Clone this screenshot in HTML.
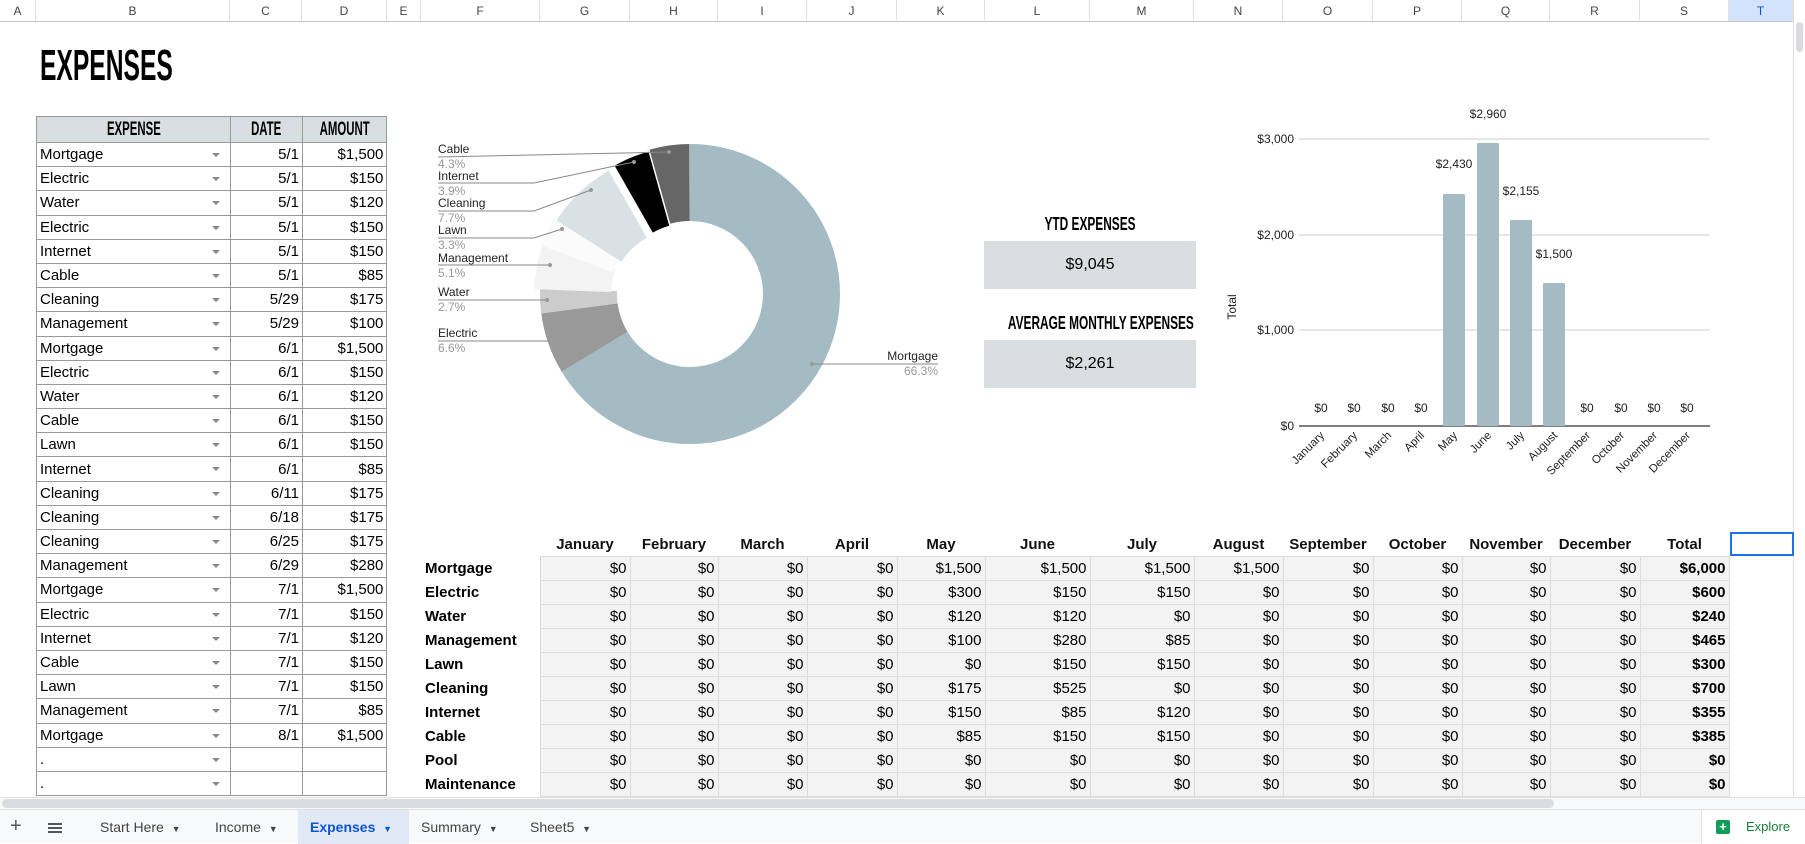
<!DOCTYPE html>
<html><head><meta charset="utf-8">
<style>
*{margin:0;padding:0;box-sizing:border-box}
body{width:1805px;height:843px;overflow:hidden;background:#fff;font-family:"Liberation Sans",Arial,sans-serif;position:relative;color:#000}
.abs{position:absolute}
.colhdr{position:absolute;top:0;height:22px;border-right:1px solid #e0e0e0;border-bottom:1px solid #c7c7c7;font-size:12px;color:#444;text-align:center;line-height:22px;background:#fff}
.cond{display:inline-block;transform:scaleX(0.6);transform-origin:center;white-space:nowrap;font-weight:bold}
table{border-collapse:collapse;table-layout:fixed}
#lt{position:absolute;left:36px;top:116px}
#lt td{border:1px solid #999;height:24.19px;font-size:15px;padding:0 3px;white-space:nowrap;overflow:hidden;position:relative}
#lt tr.h td{height:26px;background:#d9dfe1;text-align:center;font-size:19px;padding:0}
#lt td.r{text-align:right}
.dd{position:absolute;right:10px;top:10px;width:0;height:0;border-left:4px solid transparent;border-right:4px solid transparent;border-top:4px solid #888}
#bt{position:absolute;left:421px;top:533px}
#bt td{height:24px;font-size:15px;padding:0 3px;text-align:right;white-space:nowrap}
#bt tr.h td{height:23px;text-align:center;font-weight:bold;color:#111}
#bt td.l{text-align:left;font-weight:bold;padding-left:4px;background:#fff;border:none}
#bt tr.d td{background:#f3f3f3;border:1px solid #dcdcdc}
#bt tr.d td.l{background:#fff;border:none}
#bt td.t{font-weight:bold}
.box{position:absolute;left:984px;width:212px;height:48px;background:#d9dfe1;text-align:center;line-height:48px;font-size:16px}
.bl{position:absolute;font-size:12px;color:#222}
.bp{position:absolute;font-size:12px;color:#999}
</style></head><body>

<div class="colhdr" style="left:0;width:36px">A</div>
<div class="colhdr" style="left:36px;width:194px">B</div>
<div class="colhdr" style="left:230px;width:72px">C</div>
<div class="colhdr" style="left:302px;width:85px">D</div>
<div class="colhdr" style="left:387px;width:34px">E</div>
<div class="colhdr" style="left:421px;width:119px">F</div>
<div class="colhdr" style="left:540px;width:90px">G</div>
<div class="colhdr" style="left:630px;width:88px">H</div>
<div class="colhdr" style="left:718px;width:89px">I</div>
<div class="colhdr" style="left:807px;width:90px">J</div>
<div class="colhdr" style="left:897px;width:88px">K</div>
<div class="colhdr" style="left:985px;width:105px">L</div>
<div class="colhdr" style="left:1090px;width:104px">M</div>
<div class="colhdr" style="left:1194px;width:89px">N</div>
<div class="colhdr" style="left:1283px;width:90px">O</div>
<div class="colhdr" style="left:1373px;width:89px">P</div>
<div class="colhdr" style="left:1462px;width:88px">Q</div>
<div class="colhdr" style="left:1550px;width:90px">R</div>
<div class="colhdr" style="left:1640px;width:89px">S</div>
<div class="colhdr" style="left:1729px;width:64px;background:#d3e3fd;color:#0b57d0">T</div>
<div class="abs" style="left:1793px;top:0;width:12px;height:797px;background:#fff;border-left:1px solid #e0e0e0"></div>
<div class="abs" style="left:1796px;top:22px;width:7px;height:30px;background:#dadce0;border-radius:4px"></div>

<div class="abs" style="left:40px;top:38px;font-size:44px;line-height:56px;font-weight:bold;transform:scaleX(0.56);transform-origin:left;white-space:nowrap">EXPENSES</div>

<table id="lt">
<colgroup><col style="width:194px"><col style="width:72px"><col style="width:84px"></colgroup>
<tr class="h"><td><span class="cond">EXPENSE</span></td><td><span class="cond">DATE</span></td><td><span class="cond">AMOUNT</span></td></tr>
<tr><td>Mortgage<i class="dd"></i></td><td class="r">5/1</td><td class="r">$1,500</td></tr>
<tr><td>Electric<i class="dd"></i></td><td class="r">5/1</td><td class="r">$150</td></tr>
<tr><td>Water<i class="dd"></i></td><td class="r">5/1</td><td class="r">$120</td></tr>
<tr><td>Electric<i class="dd"></i></td><td class="r">5/1</td><td class="r">$150</td></tr>
<tr><td>Internet<i class="dd"></i></td><td class="r">5/1</td><td class="r">$150</td></tr>
<tr><td>Cable<i class="dd"></i></td><td class="r">5/1</td><td class="r">$85</td></tr>
<tr><td>Cleaning<i class="dd"></i></td><td class="r">5/29</td><td class="r">$175</td></tr>
<tr><td>Management<i class="dd"></i></td><td class="r">5/29</td><td class="r">$100</td></tr>
<tr><td>Mortgage<i class="dd"></i></td><td class="r">6/1</td><td class="r">$1,500</td></tr>
<tr><td>Electric<i class="dd"></i></td><td class="r">6/1</td><td class="r">$150</td></tr>
<tr><td>Water<i class="dd"></i></td><td class="r">6/1</td><td class="r">$120</td></tr>
<tr><td>Cable<i class="dd"></i></td><td class="r">6/1</td><td class="r">$150</td></tr>
<tr><td>Lawn<i class="dd"></i></td><td class="r">6/1</td><td class="r">$150</td></tr>
<tr><td>Internet<i class="dd"></i></td><td class="r">6/1</td><td class="r">$85</td></tr>
<tr><td>Cleaning<i class="dd"></i></td><td class="r">6/11</td><td class="r">$175</td></tr>
<tr><td>Cleaning<i class="dd"></i></td><td class="r">6/18</td><td class="r">$175</td></tr>
<tr><td>Cleaning<i class="dd"></i></td><td class="r">6/25</td><td class="r">$175</td></tr>
<tr><td>Management<i class="dd"></i></td><td class="r">6/29</td><td class="r">$280</td></tr>
<tr><td>Mortgage<i class="dd"></i></td><td class="r">7/1</td><td class="r">$1,500</td></tr>
<tr><td>Electric<i class="dd"></i></td><td class="r">7/1</td><td class="r">$150</td></tr>
<tr><td>Internet<i class="dd"></i></td><td class="r">7/1</td><td class="r">$120</td></tr>
<tr><td>Cable<i class="dd"></i></td><td class="r">7/1</td><td class="r">$150</td></tr>
<tr><td>Lawn<i class="dd"></i></td><td class="r">7/1</td><td class="r">$150</td></tr>
<tr><td>Management<i class="dd"></i></td><td class="r">7/1</td><td class="r">$85</td></tr>
<tr><td>Mortgage<i class="dd"></i></td><td class="r">8/1</td><td class="r">$1,500</td></tr>
<tr><td>.<i class="dd"></i></td><td class="r"></td><td class="r"></td></tr>
<tr><td>.<i class="dd"></i></td><td class="r"></td><td class="r"></td></tr>
</table>

<svg class="abs" style="left:0;top:0" width="1000" height="460">
<g transform="translate(690,294) rotate(-90)" fill="none" stroke-width="77">
<circle r="111.5" stroke="#a5bbc3" stroke-dasharray="464.5 700.6" stroke-dashoffset="0"/>
<circle r="111.5" stroke="#999999" stroke-dasharray="46.24 700.6" stroke-dashoffset="-464.5"/>
<circle r="111.5" stroke="#cccccc" stroke-dasharray="18.92 700.6" stroke-dashoffset="-510.74"/>
<circle r="111.5" stroke="#f3f3f3" stroke-dasharray="35.73 700.6" stroke-dashoffset="-529.66" transform="translate(-1,-6)"/>
<circle r="111.5" stroke="#fbfbfb" stroke-dasharray="23.12 700.6" stroke-dashoffset="-565.39" transform="translate(-4,-9)"/>
<circle r="111.5" stroke="#d9e1e4" stroke-dasharray="53.95 700.6" stroke-dashoffset="-588.51" transform="translate(-7,-7)"/>
<circle r="111.5" stroke="#000000" stroke-dasharray="27.32 700.6" stroke-dashoffset="-642.46" transform="translate(-2,-1)"/>
<circle r="111.5" stroke="#666666" stroke-dasharray="30.13 700.6" stroke-dashoffset="-669.78"/>
</g>
<g stroke="#888" stroke-width="1" fill="none">
<polyline points="438,157 669,152"/>
<polyline points="438,183 534,183 634,162"/>
<polyline points="438,211 534,211 591,190"/>
<polyline points="438,238 534,238 562,229"/>
<polyline points="438,265 550,265"/>
<polyline points="438,300 547,300"/>
<polyline points="438,341 551,341"/>
<polyline points="812,364 938,364"/>
</g>
<g fill="#999"><circle cx="669" cy="152" r="2"/><circle cx="634" cy="162" r="2"/><circle cx="591" cy="190" r="2"/><circle cx="562" cy="229" r="2"/><circle cx="550" cy="265" r="2"/><circle cx="547" cy="300" r="2"/><circle cx="551" cy="341" r="2"/><circle cx="812" cy="364" r="2"/></g>
</svg>
<div class="bl" style="left:438px;top:142px">Cable</div><div class="bp" style="left:438px;top:157px">4.3%</div>
<div class="bl" style="left:438px;top:169px">Internet</div><div class="bp" style="left:438px;top:184px">3.9%</div>
<div class="bl" style="left:438px;top:196px">Cleaning</div><div class="bp" style="left:438px;top:211px">7.7%</div>
<div class="bl" style="left:438px;top:223px">Lawn</div><div class="bp" style="left:438px;top:238px">3.3%</div>
<div class="bl" style="left:438px;top:251px">Management</div><div class="bp" style="left:438px;top:266px">5.1%</div>
<div class="bl" style="left:438px;top:285px">Water</div><div class="bp" style="left:438px;top:300px">2.7%</div>
<div class="bl" style="left:438px;top:326px">Electric</div><div class="bp" style="left:438px;top:341px">6.6%</div>
<div class="bl" style="left:838px;width:100px;text-align:right;top:349px">Mortgage</div><div class="bp" style="left:838px;width:100px;text-align:right;top:364px">66.3%</div>

<div class="abs" style="left:984px;width:212px;top:214px;text-align:center;font-size:18px"><span class="cond" style="transform:scaleX(0.66)">YTD EXPENSES</span></div>
<div class="box" style="top:241px">$9,045</div>
<div class="abs" style="left:960px;width:260px;top:313px;text-align:center;font-size:18px"><span class="cond" style="transform:scaleX(0.66)">AVERAGE MONTHLY EXPENSES</span></div>
<div class="box" style="top:340px">$2,261</div>

<svg class="abs" style="left:1200px;top:100px" width="530" height="400" font-family="Liberation Sans, Arial, sans-serif">
<g stroke="#ccc" stroke-width="1"><line x1="99" y1="39" x2="510" y2="39"/><line x1="99" y1="135" x2="510" y2="135"/><line x1="99" y1="230" x2="510" y2="230"/></g>
<line x1="99" y1="326" x2="510" y2="326" stroke="#333" stroke-width="1.3"/>
<g font-size="12" fill="#222" text-anchor="end"><text x="94" y="43">$3,000</text><text x="94" y="139">$2,000</text><text x="94" y="234">$1,000</text><text x="94" y="330">$0</text></g>
<text transform="translate(36,207) rotate(-90)" font-size="12" fill="#222" text-anchor="middle">Total</text>
<g fill="#a5bbc3">
<rect x="243" y="94" width="22" height="232" rx="1"/>
<rect x="277" y="43" width="22" height="283" rx="1"/>
<rect x="310" y="120" width="22" height="206" rx="1"/>
<rect x="343" y="183" width="22" height="143" rx="1"/>
</g>
<g font-size="12" fill="#222" text-anchor="middle">
<text x="254" y="68">$2,430</text><text x="288" y="18">$2,960</text><text x="321" y="95">$2,155</text><text x="354" y="158">$1,500</text>
<text x="121" y="312">$0</text><text x="154" y="312">$0</text><text x="188" y="312">$0</text><text x="221" y="312">$0</text>
<text x="387" y="312">$0</text><text x="421" y="312">$0</text><text x="454" y="312">$0</text><text x="487" y="312">$0</text>
</g>
<g font-size="11.5" fill="#222" text-anchor="end">
<text transform="translate(125,336) rotate(-45)">January</text>
<text transform="translate(158,336) rotate(-45)">February</text>
<text transform="translate(192,336) rotate(-45)">March</text>
<text transform="translate(225,336) rotate(-45)">April</text>
<text transform="translate(258,336) rotate(-45)">May</text>
<text transform="translate(292,336) rotate(-45)">June</text>
<text transform="translate(325,336) rotate(-45)">July</text>
<text transform="translate(358,336) rotate(-45)">August</text>
<text transform="translate(391,336) rotate(-45)">September</text>
<text transform="translate(425,336) rotate(-45)">October</text>
<text transform="translate(458,336) rotate(-45)">November</text>
<text transform="translate(491,336) rotate(-45)">December</text>
</g>
</svg>

<table id="bt">
<colgroup><col style="width:119px"><col style="width:90px"><col style="width:88px"><col style="width:89px"><col style="width:90px"><col style="width:88px"><col style="width:105px"><col style="width:104px"><col style="width:89px"><col style="width:90px"><col style="width:89px"><col style="width:88px"><col style="width:90px"><col style="width:89px"></colgroup>
<tr class="h"><td class="l"></td><td>January</td><td>February</td><td>March</td><td>April</td><td>May</td><td>June</td><td>July</td><td>August</td><td>September</td><td>October</td><td>November</td><td>December</td><td>Total</td></tr>
<tr class="d"><td class="l">Mortgage</td><td>$0</td><td>$0</td><td>$0</td><td>$0</td><td>$1,500</td><td>$1,500</td><td>$1,500</td><td>$1,500</td><td>$0</td><td>$0</td><td>$0</td><td>$0</td><td class="t">$6,000</td></tr>
<tr class="d"><td class="l">Electric</td><td>$0</td><td>$0</td><td>$0</td><td>$0</td><td>$300</td><td>$150</td><td>$150</td><td>$0</td><td>$0</td><td>$0</td><td>$0</td><td>$0</td><td class="t">$600</td></tr>
<tr class="d"><td class="l">Water</td><td>$0</td><td>$0</td><td>$0</td><td>$0</td><td>$120</td><td>$120</td><td>$0</td><td>$0</td><td>$0</td><td>$0</td><td>$0</td><td>$0</td><td class="t">$240</td></tr>
<tr class="d"><td class="l">Management</td><td>$0</td><td>$0</td><td>$0</td><td>$0</td><td>$100</td><td>$280</td><td>$85</td><td>$0</td><td>$0</td><td>$0</td><td>$0</td><td>$0</td><td class="t">$465</td></tr>
<tr class="d"><td class="l">Lawn</td><td>$0</td><td>$0</td><td>$0</td><td>$0</td><td>$0</td><td>$150</td><td>$150</td><td>$0</td><td>$0</td><td>$0</td><td>$0</td><td>$0</td><td class="t">$300</td></tr>
<tr class="d"><td class="l">Cleaning</td><td>$0</td><td>$0</td><td>$0</td><td>$0</td><td>$175</td><td>$525</td><td>$0</td><td>$0</td><td>$0</td><td>$0</td><td>$0</td><td>$0</td><td class="t">$700</td></tr>
<tr class="d"><td class="l">Internet</td><td>$0</td><td>$0</td><td>$0</td><td>$0</td><td>$150</td><td>$85</td><td>$120</td><td>$0</td><td>$0</td><td>$0</td><td>$0</td><td>$0</td><td class="t">$355</td></tr>
<tr class="d"><td class="l">Cable</td><td>$0</td><td>$0</td><td>$0</td><td>$0</td><td>$85</td><td>$150</td><td>$150</td><td>$0</td><td>$0</td><td>$0</td><td>$0</td><td>$0</td><td class="t">$385</td></tr>
<tr class="d"><td class="l">Pool</td><td>$0</td><td>$0</td><td>$0</td><td>$0</td><td>$0</td><td>$0</td><td>$0</td><td>$0</td><td>$0</td><td>$0</td><td>$0</td><td>$0</td><td class="t">$0</td></tr>
<tr class="d"><td class="l">Maintenance</td><td>$0</td><td>$0</td><td>$0</td><td>$0</td><td>$0</td><td>$0</td><td>$0</td><td>$0</td><td>$0</td><td>$0</td><td>$0</td><td>$0</td><td class="t">$0</td></tr>
</table>
<div class="abs" style="left:1730px;top:532px;width:64px;height:24px;border:2px solid #1a73e8"></div>

<div class="abs" style="left:0;top:797px;width:1805px;height:12px;background:#f8f9fa;border-top:1px solid #e0e0e0"></div>
<div class="abs" style="left:2px;top:799px;width:1552px;height:9px;background:#dadce0;border-radius:5px"></div>
<div class="abs" style="left:0;top:809px;width:1805px;height:34px;background:#f8f9fa;border-top:1px solid #e0e0e0;font-size:14px;color:#444">
<div class="abs" style="left:10px;top:5px;font-size:20px;color:#555">+</div>
<div class="abs" style="left:48px;top:13px;width:14px;height:2px;background:#555;box-shadow:0 4px 0 #555,0 8px 0 #555"></div>
<div class="abs" style="left:100px;top:9px">Start Here&nbsp; <span style="font-size:9px">▼</span></div>
<div class="abs" style="left:215px;top:9px">Income&nbsp; <span style="font-size:9px">▼</span></div>
<div class="abs" style="left:298px;top:0;width:111px;height:34px;background:#e1e9f7;color:#0b57d0;font-weight:bold;padding:9px 0 0 12px">Expenses&nbsp; <span style="font-size:9px">▼</span></div>
<div class="abs" style="left:421px;top:9px">Summary&nbsp; <span style="font-size:9px">▼</span></div>
<div class="abs" style="left:530px;top:9px">Sheet5&nbsp; <span style="font-size:9px">▼</span></div>
<div class="abs" style="left:1701px;top:0;width:104px;height:34px;border-left:1px solid #e0e0e0;background:#fff"></div>
<div class="abs" style="left:1716px;top:10px;width:14px;height:14px;background:#0f9d58;border-radius:2px;color:#fff;font-size:13px;line-height:14px;text-align:center;font-weight:bold">+</div>
<div class="abs" style="left:1746px;top:9px;color:#188038;font-size:13px">Explore</div>
</div>
</body></html>
